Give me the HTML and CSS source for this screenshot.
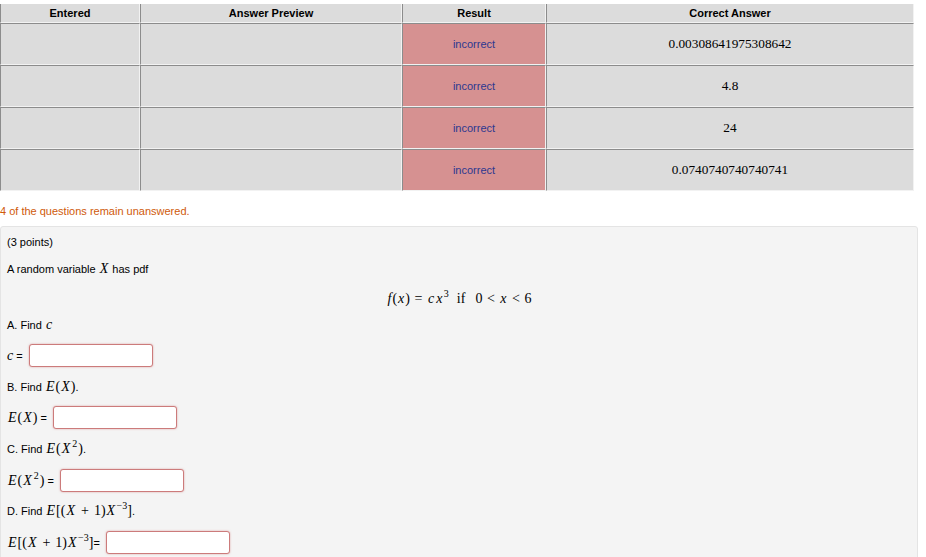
FILE: index.html
```html
<!DOCTYPE html>
<html>
<head>
<meta charset="utf-8">
<link rel="stylesheet" href="styles.css">
</head>
<body>
<table class="results">
  <tr class="head">
    <th class="c-entered">Entered</th>
    <th class="c-preview">Answer Preview</th>
    <th class="c-result">Result</th>
    <th class="c-correct">Correct Answer</th>
  </tr>
  <tr>
    <td></td><td></td><td class="bad">incorrect</td><td class="num">0.00308641975308642</td>
  </tr>
  <tr>
    <td></td><td></td><td class="bad">incorrect</td><td class="num">4.8</td>
  </tr>
  <tr>
    <td></td><td></td><td class="bad">incorrect</td><td class="num">24</td>
  </tr>
  <tr>
    <td></td><td></td><td class="bad">incorrect</td><td class="num">0.0740740740740741</td>
  </tr>
</table>

<p class="summary">4 of the questions remain unanswered.</p>

<div class="problem">
  <p class="line first">(3 points)</p>
  <p class="line">A random variable <span class="mi">X</span> has pdf</p>
  <p class="display"><span class="mi">f</span><span class="mn">(</span><span class="mi">x</span><span class="mn">)</span><span class="mo">=</span><span class="mi">c</span><span class="mi">x</span><sup class="sup">3</sup><span class="mtext">if</span><span class="mn">0</span><span class="mo">&lt;</span><span class="mi">x</span><span class="mo">&lt;</span><span class="mn">6</span></p>
  <p class="line qa">A. Find <span class="mi">c</span></p>
  <div class="answer a1"><span class="math"><span class="mi tight">c</span></span><span class="eq">&nbsp;=</span><span class="box"></span></div>
  <p class="line q">B. Find <span class="mi">E</span><span class="mn">(</span><span class="mi">X</span><span class="mn">)</span>.</p>
  <div class="answer a1"><span class="math"><span class="mi">E</span><span class="mn">(</span><span class="mi">X</span><span class="mn">)</span></span><span class="eq">&nbsp;=</span><span class="box"></span></div>
  <p class="line q">C. Find <span class="mi">E</span><span class="mn">(</span><span class="mi">X</span><sup class="sup sq">2</sup><span class="mn">)</span>.</p>
  <div class="answer"><span class="math"><span class="mi">E</span><span class="mn">(</span><span class="mi">X</span><sup class="sup sq">2</sup><span class="mn">)</span></span><span class="eq">&nbsp;=</span><span class="box"></span></div>
  <p class="line qd">D. Find <span class="mi">E</span><span class="mn">[(</span><span class="mi">X</span><span class="mo bin">+</span><span class="mn">1)</span><span class="mi">X</span><sup class="sup">&minus;3</sup><span class="mn">]</span>.</p>
  <div class="answer"><span class="math"><span class="mi">E</span><span class="mn">[(</span><span class="mi">X</span><span class="mo bin">+</span><span class="mn">1)</span><span class="mi">X</span><sup class="sup">&minus;3</sup><span class="mn">]</span></span><span class="eq">=</span><span class="box"></span></div>
</div>
</body>
</html>
```

FILE: styles.css
```css
html, body {
  margin: 0;
  padding: 0;
  background: #ffffff;
  font-family: "Liberation Sans", Arial, sans-serif;
  font-size: 11px;
  color: #000;
}

.results {
  margin-top: 4px;
  width: 914px;
  border-collapse: separate;
  border-spacing: 0;
  table-layout: fixed;
}

.results th,
.results td {
  box-sizing: border-box;
  background: #dcdcdc;
  text-align: center;
  padding: 0;
  border-top: 1px solid #8c8c8c;
  border-left: 1px solid #8c8c8c;
  border-bottom: 1px solid #f2f2f2;
  border-right: 1px solid #f2f2f2;
}

.results .head th {
  height: 19px;
  font-weight: bold;
  font-size: 11px;
  border-top: none;
}

.results td {
  height: 42px;
}

.c-entered { width: 140px; }
.c-preview { width: 262px; }
.c-result { width: 144px; }

.results td.bad {
  background: #d69191;
  color: #2d3890;
  font-size: 11px;
}

.results td.num {
  font-family: "Liberation Serif", "Times New Roman", serif;
  font-size: 13.3px;
}

.summary {
  margin: 13px 0 0 0;
  line-height: 14px;
  color: #cf5a0a;
}

.problem {
  margin-top: 8px;
  width: 918px;
  min-height: 340px;
  background: #f4f4f4;
  border: 1px solid #e4e4e4;
  border-radius: 3px;
  padding: 7px 0 0 6px;
  box-sizing: border-box;
}

.line {
  margin: 11px 0 0 0;
  line-height: 16px;
}

.line.first {
  margin-top: 0;
}

.line.qa {
  margin-top: 10px;
}

.line.q {
  margin-top: 12px;
}

.line.qd {
  margin-top: 11px;
}

.display {
  margin: 14px 0 0 0;
  line-height: 16px;
  text-align: center;
  font-family: "Liberation Serif", "Times New Roman", serif;
  font-size: 14px;
  padding-right: 6px;
}

.mi {
  font-family: "Liberation Serif", "Times New Roman", serif;
  font-style: italic;
  font-size: 14px;
  padding: 0 1px;
}

.mi.tight {
  padding: 0;
}

.mn {
  font-family: "Liberation Serif", "Times New Roman", serif;
  font-size: 14px;
}

.mo {
  font-family: "Liberation Serif", "Times New Roman", serif;
  font-size: 14px;
  margin: 0 4.5px;
}

.mo.bin {
  margin: 0 5px;
}

.mtext {
  font-family: "Liberation Serif", "Times New Roman", serif;
  font-size: 14px;
  margin: 0 10px 0 8px;
}

.sup {
  font-family: "Liberation Serif", "Times New Roman", serif;
  font-size: 10px;
  vertical-align: 6px;
  line-height: 0;
  margin-left: 0.5px;
}

.sup.sq {
  margin-left: 1px;
  margin-right: 1px;
}

.answer {
  display: flex;
  align-items: center;
  margin-top: 12px;
  height: 23px;
}

.answer.a1 {
  margin-top: 11px;
}

.math {
  display: inline-block;
  line-height: 16px;
  white-space: nowrap;
}

.eq {
  font-size: 11px;
  margin-right: 6px;
}

.box {
  display: inline-block;
  width: 122px;
  height: 21px;
  background: #ffffff;
  border: 1px solid #cc7b7b;
  border-radius: 3px;
  box-shadow: 0 0 2px rgba(200, 90, 90, 0.55);
}
```
